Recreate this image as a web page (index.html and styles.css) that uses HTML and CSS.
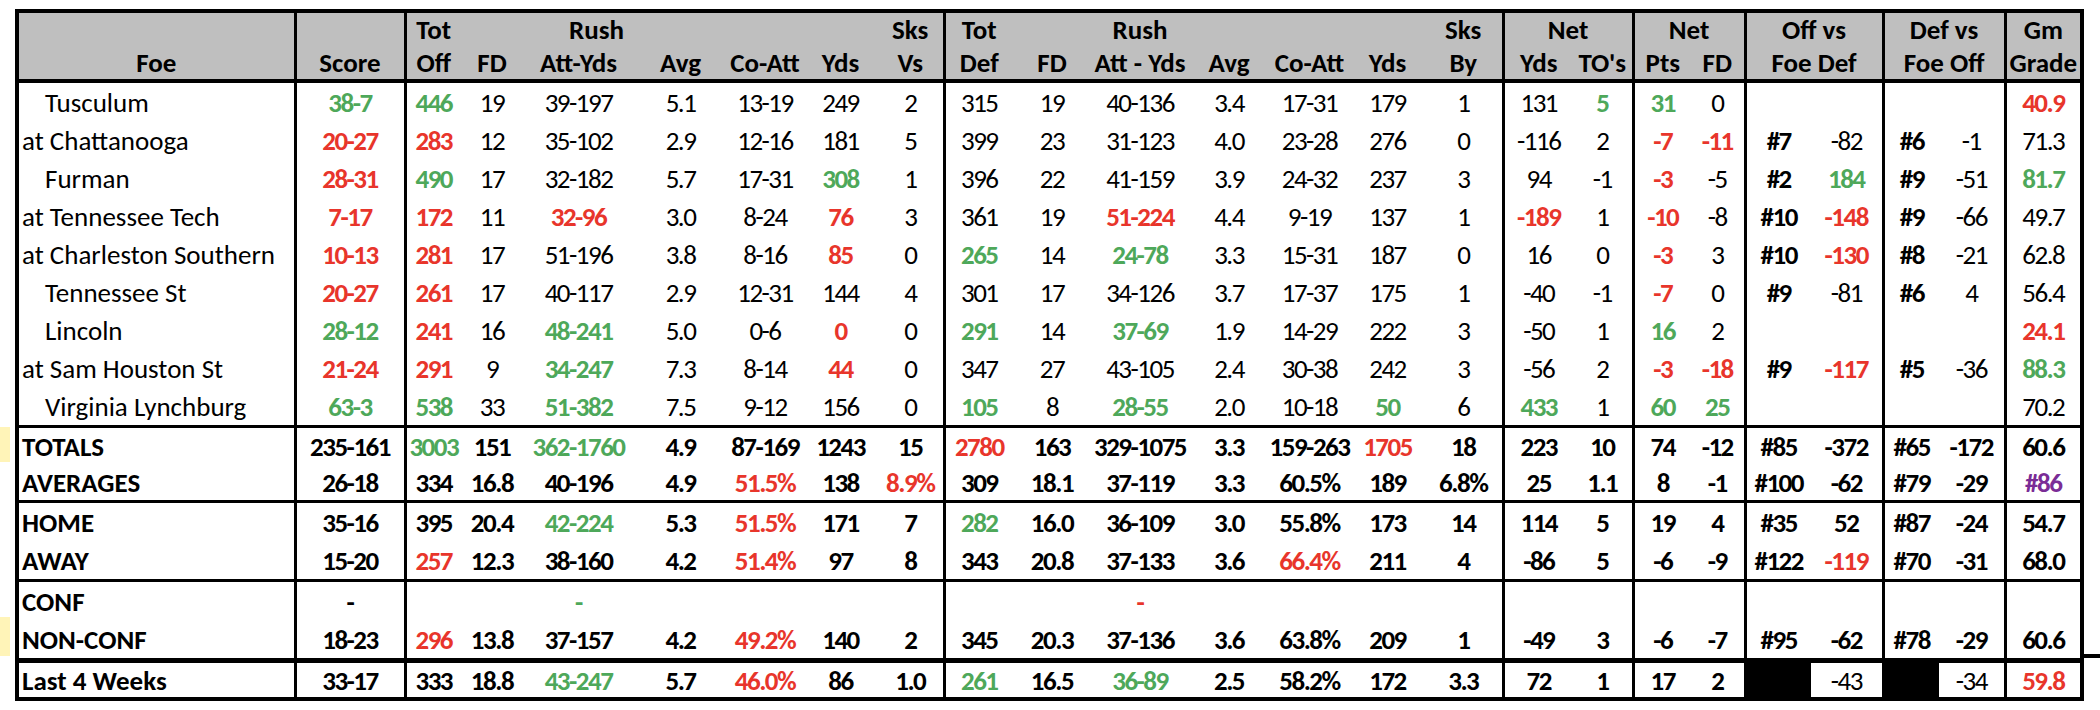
FILE: index.html
```html
<!DOCTYPE html>
<html lang="en">
<head>
<meta charset="utf-8">
<title>Season Stats</title>
<link rel="stylesheet" href="styles.css">
</head>
<body>
<div class="sheet">
<span class="mark mark-tot"></span>
<span class="mark mark-nc"></span>
<table class="stats">
<colgroup class="grp"><col class="c-foe"></colgroup>
<colgroup class="grp"><col class="c-score"></colgroup>
<colgroup class="grp"><col class="c-o1"><col class="c-o2"><col class="c-o3"><col class="c-o4"><col class="c-o5"><col class="c-o6"><col class="c-o7"></colgroup>
<colgroup class="grp"><col class="c-d1"><col class="c-d2"><col class="c-d3"><col class="c-d4"><col class="c-d5"><col class="c-d6"><col class="c-d7"></colgroup>
<colgroup class="grp"><col class="c-n1"><col class="c-n2"></colgroup>
<colgroup class="grp"><col class="c-p1"><col class="c-p2"></colgroup>
<colgroup class="grp"><col class="c-v1"><col class="c-v2"></colgroup>
<colgroup class="grp"><col class="c-f1"><col class="c-f2"></colgroup>
<colgroup class="grp"><col class="c-gm"></colgroup>
<thead>
<tr class="h1"><th></th><th></th><th>Tot</th><th></th><th class="rush-o">Rush</th><th></th><th></th><th></th><th>Sks</th><th>Tot</th><th></th><th>Rush</th><th></th><th></th><th></th><th>Sks</th><th colspan="2">Net</th><th colspan="2">Net</th><th colspan="2">Off vs</th><th colspan="2">Def vs</th><th>Gm</th></tr>
<tr class="h2"><th>Foe</th><th>Score</th><th>Off</th><th>FD</th><th>Att-Yds</th><th>Avg</th><th>Co-Att</th><th>Yds</th><th>Vs</th><th>Def</th><th>FD</th><th>Att - Yds</th><th>Avg</th><th>Co-Att</th><th>Yds</th><th>By</th><th>Yds</th><th>TO's</th><th>Pts</th><th>FD</th><th colspan="2">Foe Def</th><th colspan="2">Foe Off</th><th>Grade</th></tr>
</thead>
<tbody class="games">
<tr><td class="foe ind">Tusculum</td><td class="g">38-7</td><td class="g">446</td><td>19</td><td>39-197</td><td>5.1</td><td>13-19</td><td>249</td><td>2</td><td>315</td><td>19</td><td>40-136</td><td>3.4</td><td>17-31</td><td>179</td><td>1</td><td>131</td><td class="g">5</td><td class="g">31</td><td>0</td><td></td><td></td><td></td><td></td><td class="r">40.9</td></tr>
<tr><td class="foe">at Chattanooga</td><td class="r">20-27</td><td class="r">283</td><td>12</td><td>35-102</td><td>2.9</td><td>12-16</td><td>181</td><td>5</td><td>399</td><td>23</td><td>31-123</td><td>4.0</td><td>23-28</td><td>276</td><td>0</td><td>-116</td><td>2</td><td class="r">-7</td><td class="r">-11</td><td class="b">#7</td><td>-82</td><td class="b">#6</td><td>-1</td><td>71.3</td></tr>
<tr><td class="foe ind">Furman</td><td class="r">28-31</td><td class="g">490</td><td>17</td><td>32-182</td><td>5.7</td><td>17-31</td><td class="g">308</td><td>1</td><td>396</td><td>22</td><td>41-159</td><td>3.9</td><td>24-32</td><td>237</td><td>3</td><td>94</td><td>-1</td><td class="r">-3</td><td>-5</td><td class="b">#2</td><td class="g">184</td><td class="b">#9</td><td>-51</td><td class="g">81.7</td></tr>
<tr><td class="foe">at Tennessee Tech</td><td class="r">7-17</td><td class="r">172</td><td>11</td><td class="r">32-96</td><td>3.0</td><td>8-24</td><td class="r">76</td><td>3</td><td>361</td><td>19</td><td class="r">51-224</td><td>4.4</td><td>9-19</td><td>137</td><td>1</td><td class="r">-189</td><td>1</td><td class="r">-10</td><td>-8</td><td class="b">#10</td><td class="r">-148</td><td class="b">#9</td><td>-66</td><td>49.7</td></tr>
<tr><td class="foe">at Charleston Southern</td><td class="r">10-13</td><td class="r">281</td><td>17</td><td>51-196</td><td>3.8</td><td>8-16</td><td class="r">85</td><td>0</td><td class="g">265</td><td>14</td><td class="g">24-78</td><td>3.3</td><td>15-31</td><td>187</td><td>0</td><td>16</td><td>0</td><td class="r">-3</td><td>3</td><td class="b">#10</td><td class="r">-130</td><td class="b">#8</td><td>-21</td><td>62.8</td></tr>
<tr><td class="foe ind">Tennessee St</td><td class="r">20-27</td><td class="r">261</td><td>17</td><td>40-117</td><td>2.9</td><td>12-31</td><td>144</td><td>4</td><td>301</td><td>17</td><td>34-126</td><td>3.7</td><td>17-37</td><td>175</td><td>1</td><td>-40</td><td>-1</td><td class="r">-7</td><td>0</td><td class="b">#9</td><td>-81</td><td class="b">#6</td><td>4</td><td>56.4</td></tr>
<tr><td class="foe ind">Lincoln</td><td class="g">28-12</td><td class="r">241</td><td>16</td><td class="g">48-241</td><td>5.0</td><td>0-6</td><td class="r">0</td><td>0</td><td class="g">291</td><td>14</td><td class="g">37-69</td><td>1.9</td><td>14-29</td><td>222</td><td>3</td><td>-50</td><td>1</td><td class="g">16</td><td>2</td><td></td><td></td><td></td><td></td><td class="r">24.1</td></tr>
<tr><td class="foe">at Sam Houston St</td><td class="r">21-24</td><td class="r">291</td><td>9</td><td class="g">34-247</td><td>7.3</td><td>8-14</td><td class="r">44</td><td>0</td><td>347</td><td>27</td><td>43-105</td><td>2.4</td><td>30-38</td><td>242</td><td>3</td><td>-56</td><td>2</td><td class="r">-3</td><td class="r">-18</td><td class="b">#9</td><td class="r">-117</td><td class="b">#5</td><td>-36</td><td class="g">88.3</td></tr>
<tr><td class="foe ind">Virginia Lynchburg</td><td class="g">63-3</td><td class="g">538</td><td>33</td><td class="g">51-382</td><td>7.5</td><td>9-12</td><td>156</td><td>0</td><td class="g">105</td><td>8</td><td class="g">28-55</td><td>2.0</td><td>10-18</td><td class="g">50</td><td>6</td><td class="g">433</td><td>1</td><td class="g">60</td><td class="g">25</td><td></td><td></td><td></td><td></td><td>70.2</td></tr>
</tbody>
<tbody class="sum tot">
<tr class="r36"><td class="foe">TOTALS</td><td>235-161</td><td class="g">3003</td><td>151</td><td class="g">362-1760</td><td>4.9</td><td>87-169</td><td>1243</td><td>15</td><td class="r">2780</td><td>163</td><td>329-1075</td><td>3.3</td><td>159-263</td><td class="r">1705</td><td>18</td><td>223</td><td>10</td><td>74</td><td>-12</td><td>#85</td><td>-372</td><td>#65</td><td>-172</td><td>60.6</td></tr>
<tr class="r36"><td class="foe">AVERAGES</td><td>26-18</td><td>334</td><td>16.8</td><td>40-196</td><td>4.9</td><td class="r">51.5%</td><td>138</td><td class="r">8.9%</td><td>309</td><td>18.1</td><td>37-119</td><td>3.3</td><td>60.5%</td><td>189</td><td>6.8%</td><td>25</td><td>1.1</td><td>8</td><td>-1</td><td>#100</td><td>-62</td><td>#79</td><td>-29</td><td class="p">#86</td></tr>
</tbody>
<tbody class="sum">
<tr><td class="foe">HOME</td><td>35-16</td><td>395</td><td>20.4</td><td class="g">42-224</td><td>5.3</td><td class="r">51.5%</td><td>171</td><td>7</td><td class="g">282</td><td>16.0</td><td>36-109</td><td>3.0</td><td>55.8%</td><td>173</td><td>14</td><td>114</td><td>5</td><td>19</td><td>4</td><td>#35</td><td>52</td><td>#87</td><td>-24</td><td>54.7</td></tr>
<tr><td class="foe">AWAY</td><td>15-20</td><td class="r">257</td><td>12.3</td><td>38-160</td><td>4.2</td><td class="r">51.4%</td><td>97</td><td>8</td><td>343</td><td>20.8</td><td>37-133</td><td>3.6</td><td class="r">66.4%</td><td>211</td><td>4</td><td>-86</td><td>5</td><td>-6</td><td>-9</td><td>#122</td><td class="r">-119</td><td>#70</td><td>-31</td><td>68.0</td></tr>
</tbody>
<tbody class="sum conf">
<tr><td class="foe">CONF</td><td>-</td><td></td><td></td><td class="g">-</td><td></td><td></td><td></td><td></td><td></td><td></td><td class="r">-</td><td></td><td></td><td></td><td></td><td></td><td></td><td></td><td></td><td></td><td></td><td></td><td></td><td></td></tr>
<tr><td class="foe">NON-CONF</td><td>18-23</td><td class="r">296</td><td>13.8</td><td>37-157</td><td>4.2</td><td class="r">49.2%</td><td>140</td><td>2</td><td>345</td><td>20.3</td><td>37-136</td><td>3.6</td><td>63.8%</td><td>209</td><td>1</td><td>-49</td><td>3</td><td>-6</td><td>-7</td><td>#95</td><td>-62</td><td>#78</td><td>-29</td><td>60.6</td></tr>
</tbody>
<tbody class="sum last">
<tr class="r34"><td class="foe">Last 4 Weeks</td><td>33-17</td><td>333</td><td>18.8</td><td class="g">43-247</td><td>5.7</td><td class="r">46.0%</td><td>86</td><td>1.0</td><td class="g">261</td><td>16.5</td><td class="g">36-89</td><td>2.5</td><td>58.2%</td><td>172</td><td>3.3</td><td>72</td><td>1</td><td>17</td><td>2</td><td class="k"></td><td class="n">-43</td><td class="k"></td><td class="n">-34</td><td class="r">59.8</td></tr>
</tbody>
</table>
</div>
</body>
</html>
```

FILE: styles.css
```css
html, body {
  margin: 0;
  padding: 0;
  background: #ffffff;
}

body {
  width: 2100px;
  height: 710px;
  overflow: hidden;
  font-family: Carlito, Calibri, Lato, sans-serif;
  font-size: 27px;
  color: #000000;
}

.sheet {
  position: relative;
  padding: 9px 0 0 15px;
}

.mark {
  position: absolute;
  left: 0;
  width: 10px;
  background: #fff4b8;
}

.mark-tot {
  top: 427px;
  height: 35px;
}

.mark-nc {
  top: 617px;
  height: 39px;
}

.sheet::after {
  content: "";
  position: absolute;
  left: 2083px;
  top: 654px;
  width: 17px;
  height: 4px;
  background: #000000;
}

.stats {
  border-collapse: collapse;
  table-layout: fixed;
  width: 2066px;
  border: 4px solid #000000;
}

.grp {
  border-right: 3px solid #000000;
}

.c-foe { width: 278px; }
.c-score { width: 110px; }
.c-o1 { width: 56px; }
.c-o2 { width: 62px; }
.c-o3 { width: 111px; }
.c-o4 { width: 93px; }
.c-o5 { width: 76px; }
.c-o6 { width: 75px; }
.c-o7 { width: 66px; }
.c-d1 { width: 69px; }
.c-d2 { width: 78px; }
.c-d3 { width: 98px; }
.c-d4 { width: 80px; }
.c-d5 { width: 81px; }
.c-d6 { width: 75px; }
.c-d7 { width: 78px; }
.c-n1 { width: 70px; }
.c-n2 { width: 60px; }
.c-p1 { width: 58px; }
.c-p2 { width: 54px; }
.c-v1 { width: 66px; }
.c-v2 { width: 72px; }
.c-f1 { width: 56px; }
.c-f2 { width: 66px; }
.c-gm { width: 77px; }

thead {
  background: #bfbfbf;
  border-bottom: 4px solid #000000;
}

th {
  font-weight: bold;
  height: 33px;
  padding: 0;
  text-align: center;
  vertical-align: middle;
  white-space: nowrap;
  overflow: visible;
  line-height: 1;
}

th.rush-o {
  padding-left: 36px;
}

td {
  height: 38px;
  padding: 0;
  text-align: center;
  vertical-align: middle;
  white-space: nowrap;
  overflow: visible;
  line-height: 1;
  letter-spacing: -1.5px;
}

td.foe {
  text-align: left;
  padding-left: 3px;
  letter-spacing: 0;
}

td.ind {
  padding-left: 26px;
}

tbody {
  border-top: 3px solid #000000;
}

tbody.conf {
  border-bottom: 5px solid #000000;
}

.sum td {
  font-weight: bold;
}

tr.r36 td {
  height: 36px;
}

tr.r34 td {
  height: 34px;
}

.g {
  color: #4ea85a;
  font-weight: bold;
}

.r {
  color: #e8352b;
  font-weight: bold;
}

.p {
  color: #7a2c96;
}

.b {
  font-weight: bold;
}

.sum td.n {
  font-weight: normal;
}

td.k {
  background: #000000;
}
```
